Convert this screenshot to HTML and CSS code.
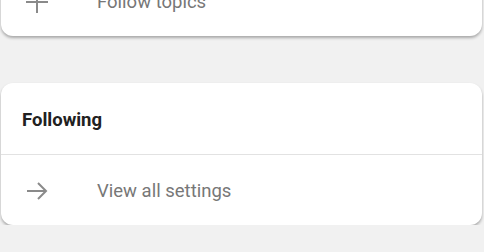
FILE: index.html
```html
<!DOCTYPE html>
<html>
<head>
<meta charset="utf-8">
<link rel="stylesheet" href="styles.css">
</head>
<body>
<div class="page">
  <div class="card card-top">
    <div class="row">
      <span class="icon">
        <svg width="24" height="24" viewBox="0 0 24 24"><path d="M12 1v22M1 12h22" stroke="#8a8a8a" stroke-width="2" fill="none"/></svg>
      </span>
      <span class="label">Follow topics</span>
    </div>
  </div>
  <div class="card card-following">
    <div class="header">Following</div>
    <div class="row">
      <span class="icon">
        <svg width="24" height="24" viewBox="0 0 24 24"><path d="M2 12h19M13 4l8 8-8 8" stroke="#8a8a8a" stroke-width="2" fill="none"/></svg>
      </span>
      <span class="label">View all settings</span>
    </div>
  </div>
</div>
</body>
</html>
```
FILE: styles.css
```css
html, body {
  margin: 0;
  padding: 0;
  background: #f1f1f1;
}
body {
  font-family: Roboto, "Liberation Sans", sans-serif;
  overflow: hidden;
}
.page {
  padding: 0 2px 0 1px;
  display: flex;
  flex-direction: column;
  gap: 47px;
}
.card {
  background: #fff;
  border-radius: 12px;
  box-shadow: 0 2px 3px rgba(0, 0, 0, 0.3);
}
.card-top {
  margin-top: -34px;
}
.row {
  height: 70px;
  display: flex;
  align-items: center;
  padding-top: 2px;
  box-sizing: border-box;
}
.icon {
  width: 24px;
  height: 24px;
  margin-left: 24px;
  margin-right: 48px;
  display: flex;
}
.label {
  font-size: 18.5px;
  color: #777;
}
.header {
  height: 72px;
  display: flex;
  align-items: center;
  padding-left: 21px;
  padding-top: 3px;
  box-sizing: border-box;
  font-size: 18.5px;
  font-weight: bold;
  color: #212121;
  border-bottom: 1px solid #e2e2e2;
}
```
